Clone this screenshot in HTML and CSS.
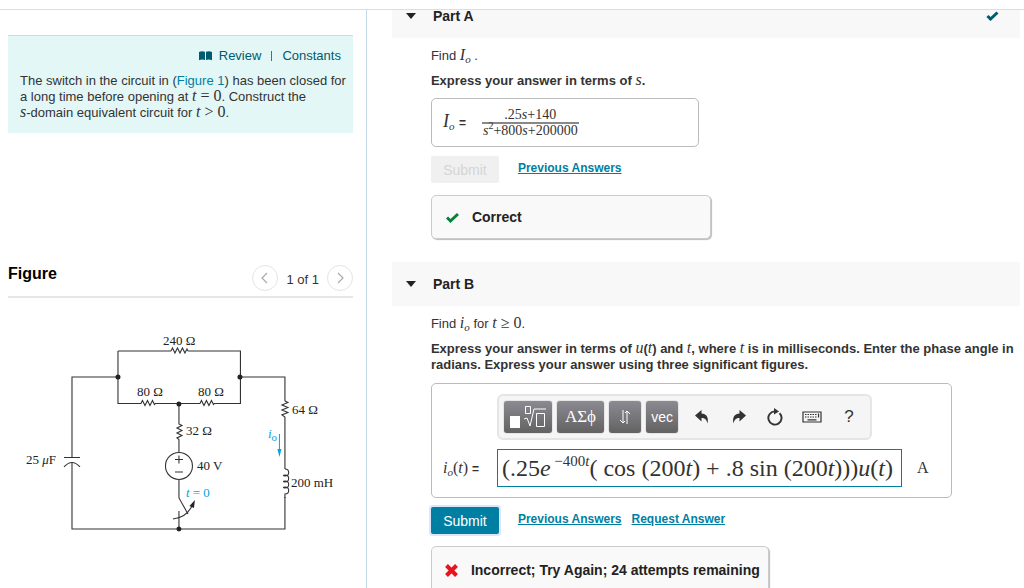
FILE: index.html
```html
<!DOCTYPE html>
<html lang="en">
<head>
<meta charset="utf-8">
<meta name="viewport" content="width=device-width, initial-scale=1">
<title>Circuit problem</title>
<link rel="stylesheet" href="styles.css">
</head>
<body>
<div class="page">
  <aside class="left">
    <section class="problem">
      <nav class="problem-links">
        <a href="#review"><svg class="book" viewBox="0 0 13 10" aria-hidden="true"><path d="M0 1Q3-.6 6 .8V9Q3 8 0 9.200zM7 .8Q10-.6 13 1V9.200Q10 8 7 9z"/></svg>Review</a>
        <span class="divider"></span>
        <a href="#constants">Constants</a>
      </nav>
      <p>The switch in the circuit in (<a class="figure-link" href="#figure">Figure 1</a>) has been closed for a long time before opening at <span class="math"><i>t</i> = 0</span>. Construct the <span class="nowrap"><span class="math"><i>s</i></span>-domain</span> equivalent circuit for <span class="math"><i>t</i> &gt; 0</span>.</p>
    </section>

    <section class="figure" id="figure">
      <header class="figure-head">
        <h2>Figure</h2>
        <div class="pager">
          <button type="button" aria-label="Previous figure"><svg viewBox="0 0 12 12"><path d="M8 1 3 6l5 5"/></svg></button>
          <span>1 of 1</span>
          <button type="button" aria-label="Next figure"><svg viewBox="0 0 12 12"><path d="m4 1 5 5-5 5"/></svg></button>
        </div>
      </header>
      <svg class="circuit" viewBox="8 325 345 220" role="img" aria-label="Circuit diagram">
        <g class="wire">
          <path d="M72 457V377H118M118 351V403.500H139M118 351H171M188 351H240.500V403.500H217M240 377H285V401M72 463V529H285V497"/>
          <path d="M171 351l1.500-3 2.500 5 2.500-5 2.500 5 2.500-5 2.500 5 2-4 1 2"/>
          <path d="M139 403.500h2l1.500-3 2.500 5 2.500-5 2.500 5 2.500-5 2 4 1-1H200l1.500-3 2.500 5 2.500-5 2.500 5 2.500-5 2 4 1-1H218"/>
          <path d="M179 403.500V424l3 1.500-5 2.500 5 2.500-5 2.500 5 2.500-5 2.500 2 1.500V452.500"/>
          <path d="M285 401l3 1.500-6 2.500 6 2.500-6 2.500 6 2.500-6 2.500 3 2V469"/>
          <path d="M285 469c5 0 5 7 0 7c-2 0-2-1 0-1c5 0 5 7 0 7c-2 0-2-1 0-1c5 0 5 7 0 7c-2 0-2-1 0-1c5 0 5 7 0 7v4"/>
          <path d="M64 457.500H80M64 467Q72 458 80 467"/>
          <circle cx="179" cy="466" r="13.500"/>
          <path d="M175 459.500H183M179 455.500V463.500M175 472H183M179 479.500V498L188 514M179 511V529M173 519Q187 518 193 504"/>
        </g>
        <g class="dot">
          <circle cx="118" cy="377" r="2.500"/><circle cx="240" cy="377" r="2.500"/><circle cx="179" cy="404" r="2.500"/><circle cx="179" cy="529" r="2.500"/>
          <path d="m195 500-5.500 6 4.500 2z"/>
        </g>
        <path class="current-line" d="M279.500 434V450"/><path class="current-head" d="M277.500 449h4l-2 8z"/>
        <g class="label">
          <text x="163" y="345">240 Ω</text>
          <text x="137" y="396">80 Ω</text>
          <text x="198" y="396">80 Ω</text>
          <text x="186" y="435">32 Ω</text>
          <text x="292" y="414">64 Ω</text>
          <text x="197" y="470">40 V</text>
          <text x="291" y="487">200 mH</text>
          <text x="26" y="464">25 <tspan class="it">μ</tspan>F</text>
        </g>
        <g class="label cyan">
          <text x="186" y="497"><tspan class="it">t</tspan> = 0</text>
          <text x="268" y="438"><tspan class="it">i</tspan><tspan class="small" dy="3">o</tspan></text>
        </g>
      </svg>
    </section>
  </aside>

  <main class="right">
    <section>
      <header class="part-head part-head-top">
        <button type="button" class="toggle"><svg viewBox="0 0 10 6" aria-hidden="true"><path d="M0 0h10L5 6z"/></svg>Part A</button>
        <svg class="head-check" viewBox="0 0 13 10" role="img" aria-label="Complete"><path d="M1.500 5 4.500 8 11.500 1.500"/></svg>
      </header>
      <div class="part-body">
        <p class="find">Find <span class="math"><i>I</i><sub>o</sub></span> .</p>
        <p class="ask">Express your answer in terms of <span class="math"><i>s</i></span>.</p>
        <div class="box answer-a">
          <span class="math lhs"><i>I</i><sub>o</sub> <span class="eq">=</span></span>
          <span class="frac math"><span>.25<i>s</i>+140</span><span><i>s</i><sup>2</sup>+800<i>s</i>+200000</span></span>
        </div>
        <div class="actions">
          <button type="button" class="submit" disabled>Submit</button>
          <a href="#previous-a">Previous Answers</a>
        </div>
        <div class="box result result-a" role="status">
          <svg class="ok" viewBox="0 0 13 11" aria-hidden="true"><path d="M1 5.500 4.500 9 12 2"/></svg>Correct
        </div>
      </div>
    </section>

    <section>
      <header class="part-head">
        <button type="button" class="toggle"><svg viewBox="0 0 10 6" aria-hidden="true"><path d="M0 0h10L5 6z"/></svg>Part B</button>
      </header>
      <div class="part-body">
        <p class="find">Find <span class="math"><i>i</i><sub>o</sub></span> for <span class="math"><i>t</i> ≥ 0</span>.</p>
        <p class="ask">Express your answer in terms of <span class="math"><i>u</i></span>(<span class="math"><i>t</i></span>) and <span class="math"><i>t</i></span>, where <span class="math"><i>t</i></span> is in milliseconds. Enter the phase angle in radians. Express your answer using three significant figures.</p>
        <div class="box answer-b">
          <div class="toolbar" role="toolbar" aria-label="Equation tools">
            <button type="button" class="key wide" aria-label="Templates"><svg viewBox="0 0 38 24"><path class="solid" d="M1 11h10v12H1z"/><path d="M15 14l3-1 3 8 4-17h12M16.500 1.500h5v7h-5zM27.500 8.500h8v13h-8z"/></svg></button>
            <button type="button" class="key wide greek">ΑΣϕ</button>
            <button type="button" class="key" aria-label="Subscripts and arrows"><svg class="arrows" viewBox="0 0 12 14"><path d="M4 0v13M1 10l3 3 2-2M8 14V1M6 3l2-2 3 3"/></svg></button>
            <button type="button" class="key">vec</button>
            <button type="button" class="tool" aria-label="Undo"><svg viewBox="0 0 16 16"><path class="fill" d="M1 6.500 7.500 1v3.500C12 4.500 15 8 13.500 14.500 12.500 10.500 11 9 7.500 9v3.500z"/></svg></button>
            <button type="button" class="tool" aria-label="Redo"><svg viewBox="0 0 16 16"><path class="fill" d="M15 6.500 8.500 1v3.500C4 4.500 1 8 2.500 14.500 3.500 10.500 5 9 8.500 9v3.500z"/></svg></button>
            <button type="button" class="tool" aria-label="Reset"><svg viewBox="0 0 16 18"><path d="M12.500 5.200A6.600 6.600 0 1 1 8 3.400"/><path class="fill" d="M7 0l5 3.400-5 3z"/></svg></button>
            <button type="button" class="tool" aria-label="Keyboard"><svg class="keyboard" viewBox="0 0 20 12"><path class="frame" d="M1 1h18v10H1z"/><path class="dots" d="M3 3.500h12M3 6h12"/><path d="M5.500 8.800h9M16.500 2.500v4"/></svg></button>
            <button type="button" class="tool help" aria-label="Help">?</button>
          </div>
          <span class="math lhs-b" id="lhs-b"><i>i</i><sub>o</sub>(<i>t</i>) <span class="eq">=</span></span>
          <div class="field" role="textbox" contenteditable="true" spellcheck="false" aria-labelledby="lhs-b">(.25<i>e</i><sup> −400<i>t</i></sup>( cos (200<i>t</i>) + .8 sin (200<i>t</i>)))<i>u</i>(<i>t</i>)</div>
          <span class="math unit">A</span>
        </div>
        <div class="actions">
          <button type="button" class="submit primary">Submit</button>
          <a href="#previous-b">Previous Answers</a>
          <a href="#request">Request Answer</a>
        </div>
        <div class="box result result-b" role="status">
          <svg class="bad" viewBox="0 0 13 13" aria-hidden="true"><path d="M1.500 1.500l10 10M11.500 1.500l-10 10"/></svg>Incorrect; Try Again; 24 attempts remaining
        </div>
      </div>
    </section>
  </main>
</div>
</body>
</html>
```

FILE: styles.css
```css
* { box-sizing: border-box; }

body {
  margin: 0;
  padding-top: 9px;
  height: 100vh;
  overflow: hidden;
  background: #fff;
  color: #333;
  font: 13px/16px "Liberation Sans", Arial, sans-serif;
}

p, h2 { margin: 0; }
button { font: inherit; color: inherit; border: 0; padding: 0; background: none; }
a { color: #007fa3; text-decoration: none; }
svg { display: block; fill: none; stroke: none; }

.page {
  display: grid;
  grid-template-columns: 43fr 77fr;
  height: 100%;
  border-top: 1px solid #ddd;
}
.left, .right { min-width: 0; overflow-y: auto; scrollbar-width: none; }
.left { padding: 25px 13px 0 8px; border-right: 1px solid #c5d9e6; }
.right { padding: 0 4px 0 25px; }

.nowrap { white-space: nowrap; }
.math { font-family: "Liberation Serif", "Times New Roman", serif; font-size: 16px; font-weight: 400; line-height: 0; }
.math sub { font-size: 11px; font-style: italic; line-height: 0; vertical-align: -3px; }

/* Problem statement */
.problem { min-height: 98px; padding: 12px 0 12px 12px; background: #e3f7f6; border-top: 1px solid #ccdcdc; }
.problem-links { display: flex; justify-content: flex-end; align-items: center; gap: 10px; margin: 0 12px 9px 0; }
.problem-links a { display: flex; align-items: center; gap: 7px; color: #005a70; }
.book { width: 13px; height: 10px; fill: #005a70; }
.divider { width: 1px; height: 10px; background: #666; }

/* Figure */
.figure-head { display: flex; align-items: center; justify-content: space-between; margin-top: 131px; padding-bottom: 4px; border-bottom: 2px solid #e6e6e6; color: #333; }
.figure-head h2 { color: #000; font-size: 16px; line-height: 20px; padding-bottom: 8px; }
.pager { display: flex; align-items: center; gap: 8px; }
.pager span { padding-top: 3px; }
.pager button { display: grid; place-items: center; width: 26px; height: 26px; border: 1px solid #e4e4e4; border-radius: 50%; }
.pager svg { width: 12px; height: 12px; stroke: #aaa; stroke-width: 1.200; }

.circuit { width: 100%; margin-top: 27px; }
.wire { stroke: #333; stroke-width: 1.100; }
.dot { fill: #222; }
.current-line { stroke: #00a5dc; }
.current-head { fill: #00a5dc; }
.label { fill: #222; font: 13px "Liberation Serif", "Times New Roman", serif; }
.cyan { fill: #00a5dc; }
.it { font-style: italic; }
.small { font-size: 11px; }

/* Parts */
.part-head { display: flex; align-items: center; justify-content: space-between; height: 44px; padding: 0 21px 0 14px; background: #f8f8f8; }
.part-head-top { height: 28px; padding-bottom: 16px; }
.part-head-top .toggle { line-height: 12px; }
.toggle { display: flex; align-items: center; gap: 17px; font-size: 14px; font-weight: 700; color: #222; }
.toggle svg { width: 10px; height: 6px; fill: #222; }
.head-check { width: 13px; height: 10px; stroke: #005a70; stroke-width: 3; }
.part-body { padding: 10px 0 23px 39px; }
.find { margin-bottom: 9px; }
.ask { font-size: 13px; font-weight: 700; }

.box { border: 1px solid #bbb; border-radius: 5px; background: #fff; }
.answer-a { display: flex; align-items: center; gap: 16px; max-width: 268px; height: 49px; margin-top: 9px; padding: 0 11px; }
.eq { font: 700 12px/12px "Liberation Sans", Arial, sans-serif; }
.lhs { font-size: 18px; }
.frac { display: flex; flex-direction: column; font-size: 14px; line-height: 14px; text-align: center; }
.frac span + span { border-top: 2px solid #888; padding: 0 1px; }
.frac sup { font-size: 10px; line-height: 0; }

.actions { display: flex; align-items: center; gap: 10px; margin-top: 9px; font-size: 12px; font-weight: 700; }
.actions a { padding-bottom: 3px; text-decoration: underline; }
.submit { width: 68px; height: 27px; margin-right: 9px; border-radius: 2px; font-size: 14px; font-weight: 400; }
.submit:disabled { background: #f0f0f0; color: #d5d5d5; }
.primary { background: #007fa3; color: #fff; box-shadow: 0 0 0 2px #dbe5fb; }

.result { display: flex; align-items: center; gap: 13px; height: 44px; margin-top: 12px; padding: 0 14px; border-color: #ccc; background: #f9f9f9; box-shadow: 1px 1px 1px #bbb; color: #222; font-size: 14px; font-weight: 700; }
.result svg { flex: none; width: 13px; height: 13px; stroke-width: 3; }
.result-a { max-width: 280px; }
.result-b { max-width: 338px; height: 48px; padding: 0 13px; white-space: nowrap; }
.ok { stroke: #038238; }
.result .bad { stroke: #e8141c; stroke-width: 4; }

.answer-b {
  display: grid;
  grid-template-columns: 54px minmax(0, 405px) 30px;
  row-gap: 9px;
  align-items: center;
  max-width: 521px;
  margin-top: 10px;
  padding: 10px 11px;
}
.toolbar { grid-column: 2 / 4; display: flex; align-items: center; gap: 5px; width: 375px; height: 46px; padding: 0 5px; border: 2px solid #e5e5e5; border-radius: 6px; background: #f5f5f5; color: #333; }
.key { display: grid; place-items: center; width: 32px; height: 32px; border-radius: 3px; background: linear-gradient(#8c8a92, #626262); box-shadow: 0 0 1px #555; color: #fff; font-size: 14px; }
.wide { width: 48px; }
.greek { font-family: "Liberation Serif", serif; font-size: 17px; }
.key svg { width: 38px; height: 24px; stroke: #fff; }
.key .solid { fill: #fff; stroke: none; }
.key .arrows { width: 12px; height: 14px; }
.tool { display: grid; place-items: center; width: 32px; height: 32px; }
.key + .tool { margin-left: 3px; }
.tool svg { width: 16px; height: 18px; stroke: #333; stroke-width: 1.900; }
.tool .fill { fill: #333; stroke: none; }
.tool .keyboard { width: 20px; height: 12px; stroke-width: 1.200; }
.keyboard .dots { stroke-dasharray: 1.500 1; }
.help { font-size: 17px; }

.lhs-b { grid-column: 1; line-height: 20px; white-space: nowrap; }
.field { height: 38px; padding: 0 4px; border: 1px solid #007fa3; outline: 0; white-space: nowrap; overflow: hidden; font: 24px/36px "Liberation Serif", "Times New Roman", serif; }
.field sup { font-size: 15px; line-height: 0; vertical-align: 10px; }
.unit { padding-left: 15px; line-height: 20px; }
```
